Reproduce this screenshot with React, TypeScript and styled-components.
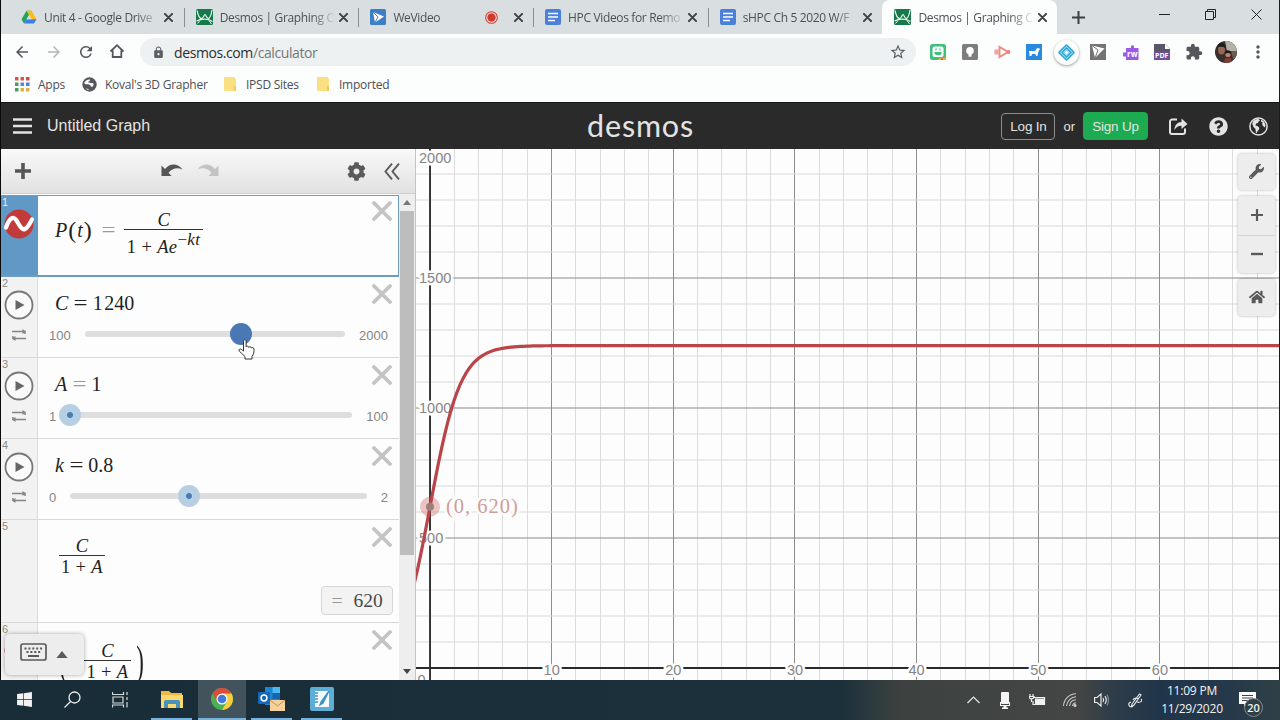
import React from "react";
import styled, { createGlobalStyle, css } from "styled-components";
import { FaWrench, FaHome, FaCog, FaQuestionCircle, FaWindows } from "react-icons/fa";
import { MdArrowBack, MdArrowForward, MdRefresh, MdLock, MdStarBorder, MdMoreVert, MdExtension } from "react-icons/md";

const UI = '"Open Sans", "Noto Sans", sans-serif';
const SANS = '"Liberation Sans", Arial, sans-serif';
const MATH = '"Liberation Serif", "Times New Roman", serif';

const Global = createGlobalStyle`
  * { box-sizing: border-box; }
  body { margin: 0; background: #000; overflow: hidden; }
  svg { display: block; flex: none; }
`;

const Screen = styled.div`
  width: 1280px;
  height: 720px;
  display: flex;
  flex-direction: column;
  overflow: hidden;
  font-family: ${UI};
`;

const BrowserWindow = styled.div`
  height: 680px;
  display: flex;
  flex-direction: column;
  border-left: 1px solid #0a0a0a;
  border-right: 1px solid #1b1b1b;
`;

/* ---------- browser chrome ---------- */

const TabStrip = styled.div`
  height: 34px;
  flex: none;
  display: flex;
  padding-left: 8px;
  background: #d9dfe1;
`;

const TabBox = styled.div<{ $active?: boolean; $divider?: boolean }>`
  width: 174.7px;
  flex: none;
  display: flex;
  align-items: center;
  padding: 0 7px 0 12px;
  position: relative;
  background: ${(p) => (p.$active ? "#fcfdfd" : "transparent")};
  border-radius: ${(p) => (p.$active ? "8px 8px 0 0" : "0")};
  ${(p) =>
    p.$divider &&
    css`
      &::after {
        content: "";
        position: absolute;
        right: -1px;
        top: 8px;
        width: 1px;
        height: 19px;
        background: #8b9092;
      }
    `}
`;

const TabTitle = styled.span<{ $w: number }>`
  width: ${(p) => p.$w}px;
  margin-left: 7px;
  overflow: hidden;
  white-space: nowrap;
  font-size: 12px;
  letter-spacing: -0.35px;
  color: #4c5054;
  mask-image: linear-gradient(90deg, #000 calc(100% - 22px), rgba(0, 0, 0, 0.1));
`;

const TabEnd = styled.span`
  margin-left: auto;
  display: flex;
  align-items: center;
  gap: 12px;
`;

const TabClose = styled.span`
  width: 16px;
  display: flex;
  justify-content: center;
`;

const NewTab = styled.div`
  width: 42px;
  display: flex;
  align-items: center;
  justify-content: center;
`;

const WindowButtons = styled.div`
  margin-left: auto;
  width: 137px;
  display: flex;
  align-items: center;
  justify-content: space-around;
  padding-bottom: 6px;
`;

const NavBar = styled.div`
  height: 36px;
  flex: none;
  display: flex;
  align-items: center;
  background: #fcfdfd;
  color: #54585c;
  padding: 0 0 0 12px;
`;

const NavButtons = styled.div`
  display: flex;
  gap: 14px;
  width: 127px;
`;

const Address = styled.div`
  width: 776px;
  height: 28px;
  border-radius: 14px;
  background: #eef1f1;
  display: flex;
  align-items: center;
  padding: 0 9px 0 12px;
  color: #5c6064;
`;

const Url = styled.span`
  margin-left: 9px;
  font-size: 14px;
  letter-spacing: -0.4px;
  color: #74787b;
  b { font-weight: 400; color: #2b2e31; }
`;

const AddressStar = styled.span`
  margin-left: auto;
`;

const Extensions = styled.div`
  padding-left: 10px;
  display: flex;
  align-items: center;
  gap: 8px;
`;

const ExtSlot = styled.span`
  width: 24px;
  height: 26px;
  display: flex;
  align-items: center;
  justify-content: center;
`;

const Halo = styled.span`
  width: 25px;
  height: 25px;
  flex: none;
  border-radius: 50%;
  background: #fff;
  box-shadow: 0 1px 3px rgba(0, 0, 0, 0.4);
  display: flex;
  align-items: center;
  justify-content: center;
`;

const Bookmarks = styled.div`
  height: 32px;
  flex: none;
  display: flex;
  align-items: center;
  padding: 0 0 4px 14px;
  background: #fcfdfd;
`;

const Bookmark = styled.div<{ $w: number; $gap: number }>`
  width: ${(p) => p.$w}px;
  display: flex;
  align-items: center;
  gap: ${(p) => p.$gap}px;
  font-size: 12px;
  letter-spacing: -0.25px;
  white-space: nowrap;
  color: #4c5053;
`;

/* ---------- calculator header ---------- */

const Header = styled.header`
  height: 47px;
  flex: none;
  display: flex;
  align-items: center;
  background: #2a2a2a;
  border-top: 1px solid #141414;
  padding: 0 11px 0 12px;
  color: #e3e3e3;
  font-family: ${SANS};
`;

const HeaderSide = styled.div<{ $end?: boolean }>`
  flex: 1;
  display: flex;
  align-items: center;
  justify-content: ${(p) => (p.$end ? "flex-end" : "flex-start")};
`;

const GraphTitle = styled.span`
  margin-left: 15px;
  font-size: 16px;
`;

const Brand = styled.span`
  font-family: Lato, sans-serif;
  font-size: 30.5px;
  line-height: 40px;
  letter-spacing: 0.8px;
  padding-bottom: 3px;
`;

const HeaderButton = styled.span<{ $solid?: boolean }>`
  height: ${(p) => (p.$solid ? 28 : 27)}px;
  width: ${(p) => (p.$solid ? 65 : 54)}px;
  display: flex;
  align-items: center;
  justify-content: center;
  white-space: nowrap;
  font-size: 13.5px;
  letter-spacing: -0.2px;
  border-radius: 4px;
  border: 1px solid ${(p) => (p.$solid ? "#1cab51" : "#8d8d8d")};
  background: ${(p) => (p.$solid ? "#1cab51" : "transparent")};
`;

const Or = styled.span`
  font-size: 13px;
  margin: 0 8px;
`;

const HeaderIcons = styled.span`
  display: flex;
  align-items: center;
  gap: 21px;
  margin-left: 21px;
`;

/* ---------- expression panel ---------- */

const Workspace = styled.main`
  flex: 1;
  min-height: 0;
  display: flex;
  background: #fdfdfd;
`;

const Panel = styled.section`
  width: 415px;
  flex: none;
  display: flex;
  flex-direction: column;
  border-right: 1px solid #c4c4c4;
  position: relative;
`;

const PanelBar = styled.div`
  height: 45px;
  flex: none;
  display: flex;
  align-items: center;
  padding: 0 15px 0 14px;
  background: linear-gradient(#f9f9f9, #e1e1e1);
  border-bottom: 1px solid #cfcfcf;
`;

const History = styled.div`
  display: flex;
  gap: 14px;
  margin-left: 130px;
  padding-bottom: 3px;
`;

const PanelTools = styled.div`
  margin-left: auto;
  display: flex;
  align-items: center;
  gap: 18px;
`;

const PanelBody = styled.div`
  flex: 1;
  min-height: 0;
  display: flex;
`;

const ExprList = styled.div`
  width: 398px;
  overflow: hidden;
  padding-top: 1px;
`;

const ExprRow = styled.div<{ $h: number; $selected?: boolean }>`
  height: ${(p) => p.$h}px;
  display: flex;
  border-bottom: 1px solid #d8d8d8;
  ${(p) =>
    p.$selected &&
    css`
      border: 1px solid #6c9cc0;
      border-bottom-width: 2px;
      border-left: 0;
    `}
`;

const Gutter = styled.div<{ $selected?: boolean }>`
  width: 37px;
  flex: none;
  display: flex;
  flex-direction: column;
  align-items: center;
  background: ${(p) => (p.$selected ? "#6098c6" : "#f2f2f2")};
  border-right: 1px solid ${(p) => (p.$selected ? "#6098c6" : "#dcdcdc")};
`;

const RowNumber = styled.span<{ $selected?: boolean }>`
  align-self: flex-start;
  margin-left: 1px;
  height: 13px;
  font: 11px/13px ${SANS};
  color: ${(p) => (p.$selected ? "#e8f1f8" : "#8a8a8a")};
`;

const Loop = styled.span`
  margin-top: 9px;
`;

const ExprBody = styled.div`
  flex: 1;
  min-width: 0;
  display: flex;
  flex-direction: column;
  position: relative;
`;

const Remove = styled.span<{ $top: number; $right: number }>`
  position: absolute;
  right: ${(p) => p.$right}px;
  top: ${(p) => p.$top}px;
`;

const Formula = styled.div<{ $x: number; $top: number }>`
  display: flex;
  align-items: center;
  margin: ${(p) => p.$top}px 0 0 ${(p) => p.$x}px;
  font-family: ${MATH};
  font-size: 20px;
  line-height: 24px;
  color: #222;
  white-space: pre;
`;

const Var = styled.i``;

const Equals = styled.span<{ $light?: boolean; $wide?: boolean }>`
  margin: ${(p) => (p.$wide ? "0 10px" : "0 6px 0 7px")};
  transform: scaleX(1.25);
  color: ${(p) => (p.$light ? "#9a9a9a" : "inherit")};
`;

const Paren = styled.span`
  margin: 0 1px;
  font-size: 24px;
`;

const Fraction = styled.span<{ $w: number }>`
  width: ${(p) => p.$w}px;
  display: flex;
  flex-direction: column;
  align-items: center;
  padding-top: 6px;
  font-size: 18.5px;
  line-height: 20px;
`;

const Numerator = styled.span`
  align-self: stretch;
  height: 20px;
  text-align: center;
  border-bottom: 1px solid #333;
`;

const Denominator = styled.span<{ $drop: number }>`
  height: 26px;
  padding-top: ${(p) => p.$drop}px;
  line-height: 22px;
  letter-spacing: 0.35px;
`;

const Sup = styled.span`
  font-size: 17px;
  position: relative;
  top: -8px;
`;

const Tall = styled.span<{ $ml?: number }>`
  margin-left: ${(p) => p.$ml ?? 0}px;
  font-size: 24px;
  transform: scale(0.95, 1.75);
  line-height: 24px;
`;

const FractionGap = styled.span`
  width: 17px;
`;

const SliderRow = styled.div`
  display: flex;
  align-items: center;
  height: 22px;
  margin: 9px 11px 0 11px;
  gap: 14px;
  font: 13px ${SANS};
  color: #858585;
`;

const Track = styled.div`
  flex: 1;
  height: 6px;
  border-radius: 3px;
  background: #dedede;
  position: relative;
  top: -1px;
`;

const Thumb = styled.span<{ $active?: boolean }>`
  position: absolute;
  top: -8px;
  margin-left: -11px;
  width: 22px;
  height: 22px;
  border-radius: 50%;
  background: ${(p) =>
    p.$active
      ? "#4a78b5"
      : "radial-gradient(circle, #4a7db4 0 2.6px, #b7cfe3 3.4px)"};
`;

const Result = styled.div`
  align-self: flex-end;
  margin: 4px 6px 0 0;
  width: 72px;
  height: 29px;
  border: 1px solid #d6d6d6;
  border-radius: 4px;
  background: #f3f3f3;
  display: flex;
  align-items: center;
  justify-content: center;
  gap: 11px;
  font: 19.5px ${MATH};
  color: #4a4a4a;
  i { font-style: normal; color: #999; }
`;

const Scrollbar = styled.div`
  width: 16px;
  display: flex;
  flex-direction: column;
  align-items: center;
  background: #eee;
`;

const ScrollArrow = styled.span`
  height: 17px;
  display: flex;
  align-items: center;
`;

const ScrollThumb = styled.span`
  width: 14px;
  height: 344px;
  background: #bdbdbd;
  margin-bottom: auto;
`;

const Keypad = styled.div`
  position: absolute;
  left: 4px;
  bottom: 5px;
  width: 79px;
  height: 41px;
  border-radius: 5px;
  background: #ededed;
  box-shadow: 0 0 4px rgba(0, 0, 0, 0.35);
  display: flex;
  align-items: center;
  padding: 0 15px 5px;
  gap: 9px;
`;

const KeypadToggle = styled.span`
  padding-top: 5px;
`;

/* ---------- graph ---------- */

const GraphPane = styled.section`
  flex: 1;
  position: relative;
  overflow: hidden;
`;

const GraphTools = styled.div`
  position: absolute;
  right: 4px;
  top: 5px;
  display: flex;
  flex-direction: column;
  gap: 6px;
`;

const ToolGroup = styled.div`
  width: 37px;
  border-radius: 4px;
  background: #ededed;
  box-shadow: 0 0 3px rgba(0, 0, 0, 0.3);
  color: #5a5a5a;
`;

const ToolButton = styled.div<{ $h: number; $line?: boolean }>`
  height: ${(p) => p.$h}px;
  display: flex;
  align-items: center;
  justify-content: center;
  padding-bottom: 1px;
  border-bottom: ${(p) => (p.$line ? "1px solid #d4d4d4" : "0")};
`;

/* ---------- taskbar ---------- */

const Taskbar = styled.footer`
  height: 40px;
  display: flex;
  align-items: stretch;
  background: linear-gradient(90deg, #192d38 0, #1b303a 840px, #3d4241 900px, #434645 1080px, #2f3d48 1110px, #21354a 1160px, #26394a 1230px, #2f4045 1280px);
  color: #f2f2f2;
`;

const TaskItem = styled.div<{ $w: number; $open?: boolean; $active?: boolean; $ml?: number }>`
  width: ${(p) => p.$w}px;
  margin-left: ${(p) => p.$ml ?? 0}px;
  display: flex;
  align-items: center;
  justify-content: center;
  border-bottom: 2px solid ${(p) => (p.$open ? "#76b2de" : "transparent")};
  background: ${(p) => (p.$active ? "#42535c" : "transparent")};
  background-clip: padding-box;
`;

const Tray = styled.div`
  margin-left: auto;
  display: flex;
  align-items: center;
`;

const TraySlot = styled.span<{ $w: number }>`
  width: ${(p) => p.$w}px;
  display: flex;
  justify-content: center;
`;

const Clock = styled.div`
  width: 76px;
  text-align: center;
  font-size: 12px;
  line-height: 18px;
  letter-spacing: -0.2px;
  white-space: nowrap;
`;

const Notice = styled.div`
  width: 41px;
  height: 40px;
  margin-left: 9px;
  position: relative;
  padding-top: 12px;
`;

const NoticeCount = styled.span`
  position: absolute;
  left: 5px;
  top: 18px;
  width: 19px;
  height: 19px;
  border-radius: 50%;
  background: #303f46;
  border: 1px solid #7e888c;
  font-size: 11px;
  font-weight: 600;
  line-height: 17px;
  display: flex;
  justify-content: center;
`;

/* ---------- icons ---------- */

const Cross = ({ size = 10, width = 2, color = "#3c4043" }) => (
  <svg width={size} height={size} viewBox="0 0 10 10" stroke={color} strokeWidth={(width * 10) / size} strokeLinecap="round">
    <path d="M1 1 9 9M9 1 1 9" />
  </svg>
);

const DriveIcon = () => (
  <svg width="16" height="16" viewBox="0 0 16 16">
    <path d="M5.500 1.800h5l-5 9L3 14.500.5 10.300z" fill="#25a35a" />
    <path d="M5.500 1.800h5l5 8.500h-5z" fill="#f9bd17" />
    <path d="M5.500 10.300h10L13 14.500H3z" fill="#3d7de8" />
    <path d="M8 6 5.400 10.300h5.200z" fill="#d9dfe1" />
  </svg>
);

const DesmosIcon = () => (
  <svg width="17" height="16" viewBox="0 0 17 16">
    <rect width="17" height="16" rx="1.500" fill="#16794a" />
    <path d="M1 1.500C2 6 3.500 9.500 5.500 9.500S8 5.500 9 5.500s1.500 4.500 3.500 4S15.500 4 16 1M.5 12C5 9.500 12 9.500 16.500 12.500" fill="none" stroke="#e9f7ee" strokeWidth="1.200" />
    <path d="M1.500 14.500 4 11.500M15.500 15 13 11.500" stroke="#e9f7ee" strokeWidth="1" />
  </svg>
);

const WeVideoIcon = () => (
  <svg width="16" height="16" viewBox="0 0 16 16">
    <rect width="16" height="16" rx="1.500" fill="#3c7fc6" />
    <path d="M3 3 14 7.500 5 13.500z" fill="#fff" />
    <path d="M3 3 8 8 5 13.500" fill="none" stroke="#3c7fc6" strokeWidth="1" />
  </svg>
);

const DocIcon = () => (
  <svg width="16" height="16" viewBox="0 0 16 16">
    <rect width="16" height="16" rx="2" fill="#4a80dc" />
    <path d="M3 4.500h10M3 8h10M3 11.500h7" stroke="#fff" strokeWidth="1.700" />
  </svg>
);

const RecordIcon = () => (
  <svg width="13" height="13" viewBox="0 0 13 13">
    <circle cx="6.500" cy="6.500" r="5.800" fill="#eef0f0" stroke="#d0392e" strokeWidth="1.100" />
    <circle cx="6.500" cy="6.500" r="4.200" fill="#d0392e" />
  </svg>
);

const HomeOutline = () => (
  <svg width="16" height="16" viewBox="0 0 16 16" fill="none" stroke="#54585c" strokeWidth="1.800">
    <path d="M1.500 8.500 8 2.200l6.500 6.300M3.700 7.500V14h8.600V7.500" />
  </svg>
);

const AppsIcon = () => (
  <svg width="15" height="15" viewBox="0 0 15 15">
    {["#d9574a", "#d9574a", "#c94f43", "#4b9a63", "#5c86d6", "#4f7fd4", "#4b9a63", "#e0b040", "#e0b040"].map((c, i) => (
      <rect key={i} x={(i % 3) * 5.5} y={Math.floor(i / 3) * 5.5} width="3.500" height="3.500" fill={c} />
    ))}
  </svg>
);

const FolderMark = () => (
  <svg width="13" height="14" viewBox="0 0 13 14">
    <path d="M1 0h10v1.500h1V14H1a1 1 0 0 1-1-1V1a1 1 0 0 1 1-1z" fill="#fae083" />
    <path d="M10 9h2v5h-2z" fill="#efcb5b" />
  </svg>
);

const GlobeBadge = () => (
  <svg width="15" height="15" viewBox="0 0 15 15">
    <circle cx="7.500" cy="7.500" r="7.200" fill="#54585c" />
    <path d="M2 6c2-3 4-4 6-3.500.5 1.500-1.500 1.500-2 3 2 0 3 1 5 .5 1 1 .5 3-1 4-2-.5-1-2-3-2.500S4 8 2 6zM4 11l3 1.500-1 .8z" fill="#fcfdfd" />
  </svg>
);

const Bitmoji = () => (
  <svg width="16" height="16" viewBox="0 0 16 16">
    <rect width="16" height="16" rx="2.500" fill="#3ec07c" />
    <rect x="2.500" y="2.500" width="11" height="10.500" rx="2" fill="#fff" />
    <path d="M6 4.500v2M10 4.500v2M5 8.500h6c0 3-6 3-6 0z" fill="#3ec07c" stroke="#3ec07c" strokeWidth="1.200" />
    <path d="M8 16c0-2 3-2.500 8-2v2z" fill="#f0b429" />
    <path d="M11 14.500h2V16h-2z" fill="#d9493f" />
  </svg>
);

const BulbTile = () => (
  <svg width="16" height="16" viewBox="0 0 16 16">
    <rect width="16" height="16" rx="1.500" fill="#7d7d7d" />
    <circle cx="8" cy="6.800" r="3.800" fill="#fff" />
    <path d="M6.500 10h3v2.700h-3z" fill="#fff" />
  </svg>
);

const Screencast = () => (
  <svg width="17" height="14" viewBox="0 0 17 14">
    <path d="M.5 4.500h4v5h-4z" fill="#f2a196" />
    <path d="M5.500 2v10L14 7z" fill="none" stroke="#ee8a80" strokeWidth="1.900" />
    <circle cx="14.500" cy="7" r="1.900" fill="#ee7d72" />
  </svg>
);

const DogTile = () => (
  <svg width="16" height="16" viewBox="0 0 16 16">
    <rect width="16" height="16" fill="#2b8adf" />
    <path d="M3 7h6l2.200-3 3 .8-1.200 1.700-1 2.500-.6 3H10l-.5-2H6l-.6 2H3.600l-.2-2.500z" fill="#fff" />
  </svg>
);

const DiamondIcon = () => (
  <svg width="17" height="17" viewBox="0 0 17 17" fill="none" stroke="#2ba4dc">
    <rect x="3" y="3" width="11" height="11" rx="1" transform="rotate(45 8.500 8.500)" fill="#9adcf5" strokeWidth="1.500" />
    <rect x="5.300" y="5.300" width="6.400" height="6.400" transform="rotate(45 8.500 8.500)" strokeWidth="1.300" />
    <rect x="7.300" y="7.300" width="2.400" height="2.400" transform="rotate(45 8.500 8.500)" fill="#fff" stroke="none" />
  </svg>
);

const GrayPlay = () => (
  <svg width="16" height="16" viewBox="0 0 16 16">
    <rect width="16" height="16" fill="#747474" />
    <path d="M2 1.500 14.500 4.500 5 14z" fill="#fff" />
    <path d="M2 1.500 8 6 5 14" fill="none" stroke="#747474" />
  </svg>
);

const ReadWrite = () => (
  <svg width="17" height="17" viewBox="0 0 17 17">
    <path d="M4 4h5V1.500h3V4h4.500v12H4v-3.500H1v-4h3z" fill="#9a5be6" />
    <text x="5" y="12.500" fontFamily="Open Sans" fontWeight="700" fontSize="8" fill="#fff">rw</text>
  </svg>
);

const PdfIcon = () => (
  <svg width="16" height="16" viewBox="0 0 16 16">
    <path d="M0 0h11l5 5v11H0z" fill="#5a5568" />
    <path d="M11 0v5h5z" fill="#fff" />
    <path d="M0 7.500h16V16H0z" fill="#6f4f96" />
    <text x="1" y="14.300" fontFamily="Open Sans" fontWeight="700" fontSize="7" fill="#fff">PDF</text>
  </svg>
);

const Avatar = () => (
  <svg width="22" height="22" viewBox="0 0 22 22">
    <clipPath id="av"><circle cx="11" cy="11" r="11" /></clipPath>
    <g clipPath="url(#av)">
      <path d="M0 0h22v22H0z" fill="#37302d" />
      <path d="M10 0h12v10H12z" fill="#b5b2a6" />
      <ellipse cx="6.500" cy="9" rx="3.400" ry="4.600" fill="#9a6556" />
      <path d="M2 6c1-6 8-5 9 1-3-1.500-6-1.500-9-1z" fill="#211c1e" />
      <circle cx="13" cy="13.500" r="2.600" fill="#bd8471" />
      <path d="M10 13c-.5-5 6.500-5 6 0-2-1.500-4-1.500-6 0z" fill="#1c1718" />
      <path d="M10 17h6l1 5H9z" fill="#7e3a34" />
      <path d="M16 10h6v8h-4z" fill="#6b5d50" />
    </g>
  </svg>
);

const ShareIcon = () => (
  <svg width="19" height="18" viewBox="0 0 19 18" fill="none" stroke="#e3e3e3" strokeWidth="2">
    <path d="M8 2.500H3a2 2 0 0 0-2 2V15a2 2 0 0 0 2 2h11a2 2 0 0 0 2-2v-3.500" />
    <path d="M5.500 13C5.500 8 8.500 5 12.500 5V1.500L18.500 7l-6 5V8.800C9 8.800 7.500 10 5.500 13z" fill="#e3e3e3" stroke="none" />
  </svg>
);

const EarthIcon = () => (
  <svg width="19" height="19" viewBox="0 0 19 19" fill="#e3e3e3">
    <circle cx="9.500" cy="9.500" r="8.600" fill="none" stroke="#e3e3e3" strokeWidth="1.500" />
    <path d="M4 4.500C5 3 7 1.500 9.500 2l1.500 1.500-1.500 1L9 6 7 6.500 6.500 8.500 8.500 9l2 2-1 2.200-1.300 1.300-.4 1.800-1-.8-.3-3.500L4.500 10 3.300 7z" />
    <path d="M12 2.500 15 4.500l1.500 3.500-.5 2.500-2-1.500-1-2 .8-1.500-1.800-1z" />
  </svg>
);

const CurveBadge = () => (
  <svg width="30" height="30" viewBox="0 0 30 30">
    <circle cx="15" cy="15" r="14.500" fill="#c23b3a" />
    <path d="M2 18.500C5 10 9 6 12.500 11.500S18 21.500 21 20s4.500-5 7-9.500" fill="none" stroke="#fff" strokeWidth="4.200" strokeLinecap="round" />
  </svg>
);

const PlayBadge = () => (
  <svg width="30" height="30" viewBox="0 0 30 30">
    <circle cx="15" cy="15" r="13.500" fill="#fafafa" stroke="#777" strokeWidth="1.800" />
    <path d="M11.500 10v10l9-5z" fill="#666" />
  </svg>
);

const LoopIcon = () => (
  <svg width="14" height="12" viewBox="0 0 14 12" fill="none" stroke="#858585" strokeWidth="1.500">
    <path d="M0 2.500h11.500M2.500 9.500H14M1 7v2.500h4M13 5V2.500H9" />
    <path d="M10.500 0 14 2.500 10.500 5zM3.500 7 0 9.500 3.500 12z" fill="#858585" stroke="none" />
  </svg>
);

const UndoArrow = ({ flip = false, color = "#555" }) => (
  <svg width="22" height="14" viewBox="0 0 22 14" transform={flip ? "scale(-1 1)" : undefined}>
    <path d="M.5 2.500V13h10L7.500 9.800C11 5.500 16 4 21.500 6.500 17 .5 9.500-.5 4 6z" fill={color} />
  </svg>
);

const ChevronsLeft = () => (
  <svg width="16" height="17" viewBox="0 0 16 17" fill="none" stroke="#5a5a5a" strokeWidth="1.900">
    <path d="M8 .7 1.500 8.500 8 16.300M15 .7 8.500 8.500 15 16.300" />
  </svg>
);

const KeyboardIcon = () => (
  <svg width="27" height="18" viewBox="0 0 27 18">
    <rect x="1" y="1" width="25" height="16" rx="2" fill="none" stroke="#5a5a5a" strokeWidth="1.700" />
    <path d="M4.500 5.500h18M6.500 9h15" stroke="#5a5a5a" strokeWidth="2" strokeDasharray="2 1.900" />
    <path d="M8 13h11" stroke="#5a5a5a" strokeWidth="2" />
  </svg>
);

const HandCursor = styled.svg`
  position: absolute;
  left: 8px;
  top: 16px;
`;

const Hand = () => (
  <HandCursor width="18" height="21" viewBox="0 0 18 21" fill="#fff" stroke="#333" strokeWidth="1">
    <path d="M5.500 12V2.200c0-2 2.600-2 2.600 0V8c.5-1.200 2.600-1 2.600.4.600-1 2.600-.8 2.600.6.600-.8 2.700-.4 2.700 1.100 0 3.500-.3 5.200-2 7.400v2.500H7v-2.500L1.200 12c-1-1.700 1-2.700 2.300-1.500z" />
  </HandCursor>
);

/* ---------- graph drawing ---------- */

const LEFT = 416;
const TOP = 149;
const gx = (t: number) => 430 + t * 12.165 - LEFT;
const gy = (p: number) => 668 - p * 0.26 - TOP;
const population = (t: number) => 1240 / (1 + Math.exp(-0.8 * t));

const curve = Array.from({ length: 290 }, (_, i) => {
  const t = -1.3 + i * 0.25;
  return `${i ? "L" : "M"}${gx(t).toFixed(2)} ${gy(population(t)).toFixed(2)}`;
}).join("");

const AxisLabel = styled.text`
  font: 14.5px ${SANS};
  fill: #858585;
  stroke: #fdfdfd;
  stroke-width: 5px;
  stroke-linejoin: round;
  paint-order: stroke;
`;

const PointLabel = styled.text`
  font: 20.5px ${MATH};
  letter-spacing: 1px;
  fill: #cf9c9c;
  stroke: #fdfdfd;
  stroke-width: 5px;
  paint-order: stroke;
`;

const Graph = () => (
  <svg width="863" height="531" viewBox="0 0 863 531">
    <rect width="863" height="531" fill="#fdfdfd" />
    {Array.from({ length: 36 }, (_, i) => i * 2).map((t) => (
      <path key={t} d={`M${Math.floor(gx(t)) + 0.5} 0V531`} stroke={t % 10 ? "#dcdcdc" : "#8e8e8e"} />
    ))}
    {Array.from({ length: 20 }, (_, i) => i * 100).map((p) => (
      <path key={p} d={`M0 ${gy(p)}H863`} stroke={p % 500 ? "#dadada" : "#8a8a8a"} strokeWidth="1.200" />
    ))}
    <path d={`M14 0V531M0 ${gy(0)}H863`} stroke="#2a2a2a" strokeWidth="1.800" />
    {[500, 1000, 1500, 2000].map((p) => (
      <AxisLabel key={p} x="3" y={p === 2000 ? 14 : gy(p) + 5}>{p}</AxisLabel>
    ))}
    {[10, 20, 30, 40, 50, 60].map((t) => (
      <AxisLabel key={t} x={gx(t)} y={gy(0) + 7} textAnchor="middle">{t}</AxisLabel>
    ))}
    <AxisLabel x="1.500" y="536">0</AxisLabel>
    <path d={curve} fill="none" stroke="#b9444a" strokeWidth="3.200" />
    <circle cx="14" cy={gy(620)} r="10" fill="#c74440" opacity=".3" />
    <circle cx="14" cy={gy(620)} r="4" fill="#9c8080" />
    <PointLabel x="30" y="364">(0, 620)</PointLabel>
  </svg>
);

/* ---------- composition ---------- */

const tabs = [
  { title: "Unit 4 - Google Drive", icon: <DriveIcon />, w: 114, divider: true },
  { title: "Desmos | Graphing C", icon: <DesmosIcon />, w: 114, divider: true },
  { title: "WeVideo", icon: <WeVideoIcon />, w: 80, rec: true, divider: true },
  { title: "HPC Videos for Remo", icon: <DocIcon />, w: 114, divider: true },
  { title: "sHPC Ch 5 2020 W/F", icon: <DocIcon />, w: 114 },
  { title: "Desmos | Graphing C", icon: <DesmosIcon />, w: 114, active: true },
];

const sliders = [
  { n: 2, name: "C", value: "1\u200A240", min: "100", max: "2000", at: 60.2, active: true },
  { n: 3, name: "A", value: "1", min: "1", max: "100", at: 0, light: true },
  { n: 4, name: "k", value: "0.8", min: "0", max: "2", at: 40 },
];

const RemoveMark = ({ top = 7, right = 7 }) => (
  <Remove $top={top} $right={right}><Cross size={20} width={3.8} color="#c4c4c4" /></Remove>
);

const Triangle = ({ down = false, size = 8, color = "#777" }) => (
  <svg width={size} height={size / 2 + 1} viewBox="0 0 8 5"><path d={down ? "M0 0h8L4 5z" : "M0 5h8L4 0z"} fill={color} /></svg>
);

export default function App() {
  return (
    <Screen>
      <Global />
      <BrowserWindow>
        <TabStrip>
          {tabs.map((t, i) => (
            <TabBox key={i} $active={t.active} $divider={t.divider}>
              {t.icon}
              <TabTitle $w={t.w}>{t.title}</TabTitle>
              <TabEnd>
                {t.rec && <RecordIcon />}
                <TabClose><Cross size={9} /></TabClose>
              </TabEnd>
            </TabBox>
          ))}
          <NewTab>
            <svg width="13" height="13" viewBox="0 0 13 13" stroke="#3c4043" strokeWidth="2"><path d="M6.500 0v13M0 6.500h13" /></svg>
          </NewTab>
          <WindowButtons>
            <svg width="11" height="11" stroke="#222"><path d="M0 5.500h11" /></svg>
            <svg width="11" height="11" fill="none" stroke="#222"><path d="M.5 2.500h8v8h-8zM2.500 2.500v-2h8v8h-2" /></svg>
            <svg width="11" height="11" stroke="#222"><path d="M.5.5l10 10M10.500.5l-10 10" /></svg>
          </WindowButtons>
        </TabStrip>
        <NavBar>
          <NavButtons>
            <MdArrowBack size={18} />
            <MdArrowForward size={18} color="#b4b7b9" />
            <MdRefresh size={18} />
            <HomeOutline />
          </NavButtons>
          <Address>
            <MdLock size={13} />
            <Url><b>desmos.com</b>/calculator</Url>
            <AddressStar><MdStarBorder size={18} /></AddressStar>
          </Address>
          <Extensions>
            <ExtSlot><Bitmoji /></ExtSlot>
            <ExtSlot><BulbTile /></ExtSlot>
            <ExtSlot><Screencast /></ExtSlot>
            <ExtSlot><DogTile /></ExtSlot>
            <ExtSlot><Halo><DiamondIcon /></Halo></ExtSlot>
            <ExtSlot><GrayPlay /></ExtSlot>
            <ExtSlot><ReadWrite /></ExtSlot>
            <ExtSlot><PdfIcon /></ExtSlot>
            <ExtSlot><MdExtension size={18} /></ExtSlot>
            <ExtSlot><Avatar /></ExtSlot>
            <ExtSlot><MdMoreVert size={20} /></ExtSlot>
          </Extensions>
        </NavBar>
        <Bookmarks>
          <Bookmark $w={67} $gap={8}><AppsIcon />Apps</Bookmark>
          <Bookmark $w={142} $gap={8}><GlobeBadge />Koval's 3D Grapher</Bookmark>
          <Bookmark $w={93} $gap={9}><FolderMark />IPSD Sites</Bookmark>
          <Bookmark $w={90} $gap={9}><FolderMark />Imported</Bookmark>
        </Bookmarks>
        <Header>
          <HeaderSide>
            <svg width="19" height="16" viewBox="0 0 19 16" stroke="#e3e3e3" strokeWidth="2.600"><path d="M0 1.500h19M0 8h19M0 14.500h19" /></svg>
            <GraphTitle>Untitled Graph</GraphTitle>
          </HeaderSide>
          <Brand>desmos</Brand>
          <HeaderSide $end>
            <HeaderButton>Log In</HeaderButton>
            <Or>or</Or>
            <HeaderButton $solid>Sign Up</HeaderButton>
            <HeaderIcons>
              <ShareIcon />
              <FaQuestionCircle size={19} />
              <EarthIcon />
            </HeaderIcons>
          </HeaderSide>
        </Header>
        <Workspace>
          <Panel>
            <PanelBar>
              <svg width="16" height="16" viewBox="0 0 16 16" stroke="#555" strokeWidth="3.600"><path d="M8 0v16M0 8h16" /></svg>
              <History>
                <UndoArrow />
                <UndoArrow flip color="#c3c3c3" />
              </History>
              <PanelTools>
                <FaCog size={19} color="#5a5a5a" />
                <ChevronsLeft />
              </PanelTools>
            </PanelBar>
            <PanelBody>
              <ExprList>
                <ExprRow $h={82} $selected>
                  <Gutter $selected>
                    <RowNumber $selected>1</RowNumber>
                    <CurveBadge />
                  </Gutter>
                  <ExprBody>
                    <RemoveMark top={5} right={6} />
                    <Formula $x={17} $top={8}>
                      <Var>P</Var><Paren>(</Paren><Var>t</Var><Paren>)</Paren>
                      <Equals $light $wide>=</Equals>
                      <Fraction $w={79}>
                        <Numerator><Var>C</Var></Numerator>
                        <Denominator $drop={6}>1 + <Var>Ae</Var><Sup>−<Var>kt</Var></Sup></Denominator>
                      </Fraction>
                    </Formula>
                  </ExprBody>
                </ExprRow>
                {sliders.map((s) => (
                  <ExprRow key={s.n} $h={81}>
                    <Gutter>
                      <RowNumber>{s.n}</RowNumber>
                      <PlayBadge />
                      <Loop><LoopIcon /></Loop>
                    </Gutter>
                    <ExprBody>
                      <RemoveMark />
                      <Formula $x={17} $top={14}>
                        <Var>{s.name}</Var>
                        <Equals $light={s.light}>=</Equals>
                        {s.value}
                      </Formula>
                      <SliderRow>
                        {s.min}
                        <Track>
                          <Thumb $active={s.active} style={{ left: `${s.at}%` }}>
                            {s.active && <Hand />}
                          </Thumb>
                        </Track>
                        {s.max}
                      </SliderRow>
                    </ExprBody>
                  </ExprRow>
                ))}
                <ExprRow $h={103}>
                  <Gutter><RowNumber>5</RowNumber></Gutter>
                  <ExprBody>
                    <RemoveMark />
                    <Formula $x={21} $top={10}>
                      <Fraction $w={46}>
                        <Numerator><Var>C</Var></Numerator>
                        <Denominator $drop={0}>1 + <Var>A</Var></Denominator>
                      </Fraction>
                    </Formula>
                    <Result><i>=</i>620</Result>
                  </ExprBody>
                </ExprRow>
                <ExprRow $h={103}>
                  <Gutter>
                    <RowNumber>6</RowNumber>
                    <CurveBadge />
                  </Gutter>
                  <ExprBody>
                    <RemoveMark />
                    <Formula $x={21} $top={12}>
                      <Tall>(</Tall>
                      <FractionGap />
                      <Fraction $w={47}>
                        <Numerator><Var>C</Var></Numerator>
                        <Denominator $drop={0}>1 + <Var>A</Var></Denominator>
                      </Fraction>
                      <Tall $ml={5}>)</Tall>
                    </Formula>
                  </ExprBody>
                </ExprRow>
              </ExprList>
              <Scrollbar>
                <ScrollArrow><Triangle /></ScrollArrow>
                <ScrollThumb />
                <ScrollArrow><Triangle down color="#444" /></ScrollArrow>
              </Scrollbar>
            </PanelBody>
            <Keypad>
              <KeyboardIcon />
              <KeypadToggle><Triangle size={12} color="#5a5a5a" /></KeypadToggle>
            </Keypad>
          </Panel>
          <GraphPane>
            <Graph />
            <GraphTools>
              <ToolGroup><ToolButton $h={36}><FaWrench size={15} /></ToolButton></ToolGroup>
              <ToolGroup>
                <ToolButton $h={40} $line>
                  <svg width="12" height="12" viewBox="0 0 12 12" stroke="#5a5a5a" strokeWidth="2.200"><path d="M6 0v12M0 6h12" /></svg>
                </ToolButton>
                <ToolButton $h={37}>
                  <svg width="12" height="12" viewBox="0 0 12 12" stroke="#5a5a5a" strokeWidth="2.400"><path d="M0 6h12" /></svg>
                </ToolButton>
              </ToolGroup>
              <ToolGroup><ToolButton $h={37}><FaHome size={16} /></ToolButton></ToolGroup>
            </GraphTools>
          </GraphPane>
        </Workspace>
      </BrowserWindow>
      <Taskbar>
        <TaskItem $w={48}><FaWindows size={17} /></TaskItem>
        <TaskItem $w={48}>
          <svg width="17" height="17" viewBox="0 0 17 17" fill="none" stroke="#eee" strokeWidth="1.300"><circle cx="10.500" cy="6.500" r="5.500" /><path d="M6.500 10.500.5 16.500" /></svg>
        </TaskItem>
        <TaskItem $w={48}>
          <svg width="17" height="17" viewBox="0 0 17 17" fill="none" stroke="#d5dadc" strokeWidth="1.200"><path d="M.5 1v2.500h11V1M1 6h10v6H1zM.5 16.500V14h11v2.500M15 1v3M15 6v3M15 11v5.500" /></svg>
        </TaskItem>
        <TaskItem $w={41} $ml={7} $open>
          <svg width="22" height="19" viewBox="0 0 22 19">
            <path d="M0 1h8l2 2h11v15H0z" fill="#f0b93c" /><path d="M0 5h22v13H0z" fill="#fbd970" />
            <path d="M3 18v-6a2 2 0 0 1 2-2h12a2 2 0 0 1 2 2v6h-4v-4H7v4z" fill="#4794b8" />
          </svg>
        </TaskItem>
        <TaskItem $w={48} $ml={6} $open $active>
          <svg width="22" height="22" viewBox="0 0 22 22">
            <circle cx="11" cy="11" r="11" fill="#4caf50" />
            <path d="M11 11 1.500 5.500A11 11 0 0 1 20.500 5.500z" fill="#de4b3c" />
            <path d="M1.500 5.500 6.200 13.700 11 11z" fill="#de4b3c" />
            <path d="M11 5.500h9.500A11 11 0 0 1 11 22l4.800-8.300z" fill="#fbcd3b" />
            <circle cx="11" cy="11" r="5.500" fill="#fff" /><circle cx="11" cy="11" r="4.300" fill="#4379dc" />
          </svg>
        </TaskItem>
        <TaskItem $w={41} $ml={5} $open>
          <svg width="27" height="26" viewBox="0 0 27 26">
            <path d="M7 1h15v18H7z" fill="#1d86d3" /><path d="M14.500 1H22v6h-7.500z" fill="#4bb8f0" /><path d="M14.500 7H22v6h-7.500z" fill="#1665ad" />
            <rect y="6" width="12" height="12" rx="1" fill="#1469bb" /><circle cx="6" cy="12" r="2.900" fill="none" stroke="#fff" strokeWidth="1.500" />
            <path d="M12 14h15v11H12z" fill="#f6d29a" /><path d="m12 14 7.500 6 7.500-6" fill="none" stroke="#c98f45" />
          </svg>
        </TaskItem>
        <TaskItem $w={41} $ml={9} $open>
          <svg width="24" height="24" viewBox="0 0 24 24">
            <rect width="24" height="24" rx="2" fill="#5caed6" /><path d="M5 4h14v16H5z" fill="#f4fafc" />
            <path d="M5 6h3M5 9h3M5 12h3M5 15h3M19 4 11 15l-1 3 3-2z" stroke="#3b93c2" strokeWidth="1.300" fill="#3b93c2" />
          </svg>
        </TaskItem>
        <Tray>
          <TraySlot $w={32}>
            <svg width="13" height="8" fill="none" stroke="#e8e8e8" strokeWidth="1.200"><path d="M.5 7 6.500 1l6 6" /></svg>
          </TraySlot>
          <TraySlot $w={32}>
            <svg width="10" height="17" viewBox="0 0 10 17" fill="#f4f4f4"><rect x="1" width="8" height="12" rx="1" /><path d="M0 10h1v3h8v-3h1v4H6.500v1.500H8V17H2v-1.500h1.500V14H0z" /></svg>
          </TraySlot>
          <TraySlot $w={33}>
            <svg width="17" height="12" viewBox="0 0 17 12" fill="none" stroke="#f0f0f0" strokeWidth="1.200"><path d="M5 3.500h10.500v7H4V7" /><path d="M6.500 5h8v4.500h-8z" fill="#f0f0f0" /><path d="M1 0v2M4 0v2M0 2.500h5c0 3-5 3-5 0zM2.500 5v3" /></svg>
          </TraySlot>
          <TraySlot $w={32}>
            <svg width="14" height="14" viewBox="0 0 14 14" fill="none" stroke="#c5c8c8" strokeWidth="1.100"><path d="M.5 13C1 6 6 1 13 .8M3.500 13C4 8 8 4 13 3.800M6.500 13c.5-3.500 3-6 6.500-6.200M9.500 13c.3-2 1.500-3 3.500-3.200" /><circle cx="12" cy="12.500" r="1" fill="#fff" /></svg>
          </TraySlot>
          <TraySlot $w={30}>
            <svg width="15" height="14" viewBox="0 0 15 14" fill="none" stroke="#e8e8e8" strokeWidth="1.200"><path d="M.6 4.500h2.500L7 1v12L3.100 9.500H.6z" /><path d="M9 5q1.200 2 0 4M11 3.200q2.500 3.800 0 7.600" /><path d="M13 1.500q3 5.500 0 11" opacity=".45" /></svg>
          </TraySlot>
          <TraySlot $w={38}>
            <svg width="14" height="15" viewBox="0 0 14 15" fill="none" stroke="#e0e4e8" strokeWidth="1.200"><path d="M4 11 11.500 1l1.500 1L6 12l-2.500 1.500zM3 9c-4 1-2 6 2 4.500M5 7c2-4 4-1 6-1.500M13 6c2 2-1 4-4 3" /></svg>
          </TraySlot>
          <Clock>11:09 PM<br />11/29/2020</Clock>
          <Notice>
            <svg width="17" height="16" viewBox="0 0 17 16"><path d="M0 0h17v12H8l-3 3.500V12H0z" fill="#fff" /><path d="M3 3.500h11M3 6h11M3 8.500h7" stroke="#38474e" /></svg>
            <NoticeCount>20</NoticeCount>
          </Notice>
        </Tray>
      </Taskbar>
    </Screen>
  );
}
